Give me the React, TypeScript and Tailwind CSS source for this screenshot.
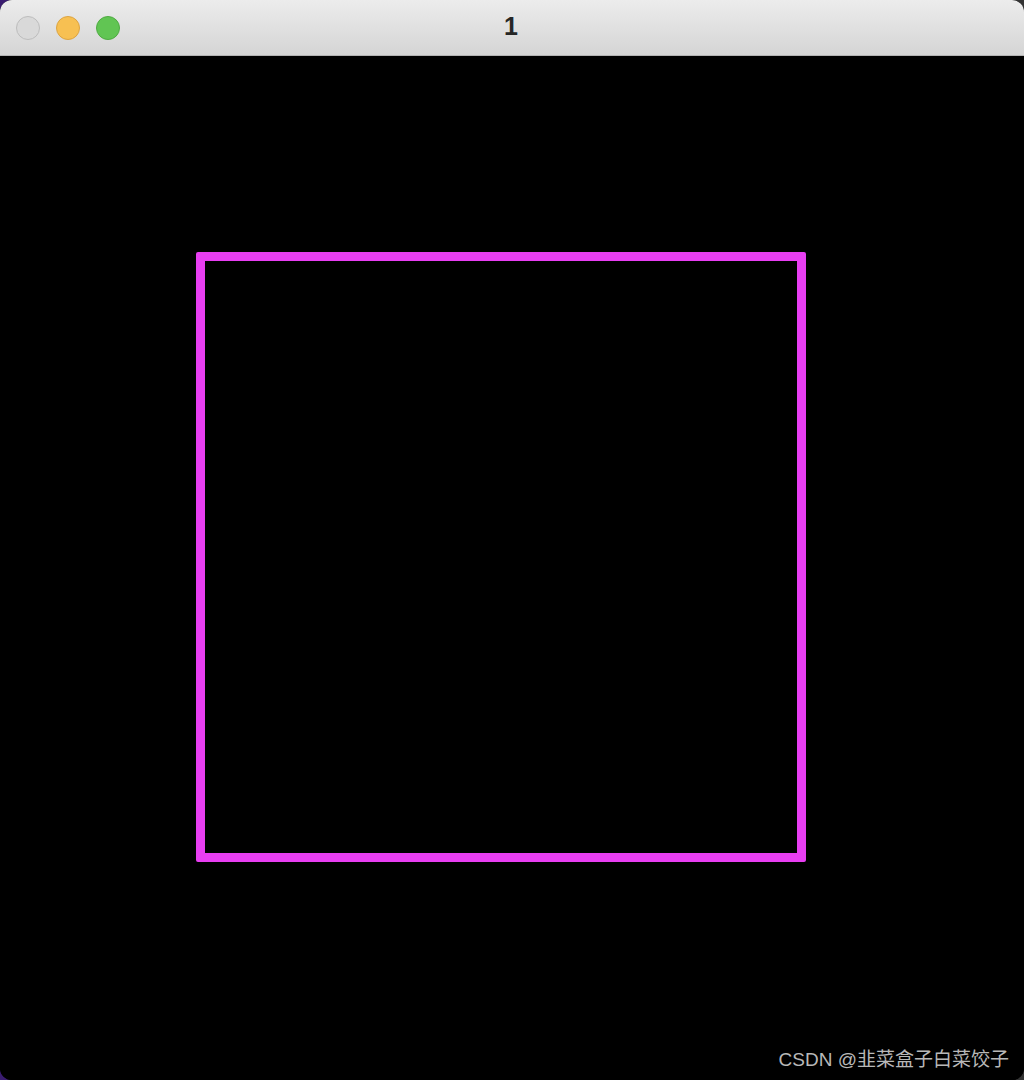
export default function App() {
  return (
    <div className="w-[1024px] h-[1080px] bg-gradient-to-r from-[#3a1c70] via-[#222] to-[#333]">
      <div className="w-full h-full rounded-[12px] overflow-hidden flex flex-col bg-black relative">
        {/* Title bar */}
        <div className="h-[56px] shrink-0 relative flex items-center bg-gradient-to-b from-[#ececec] to-[#d5d5d5] border-b border-[#b4b4b4]">
          <div className="flex items-center gap-4 pl-4">
            <div className="w-6 h-6 rounded-full bg-[#d9d9d9] border border-[#bdbdbd]" />
            <div className="w-6 h-6 rounded-full bg-[#f7c052] border border-[#dca442]" />
            <div className="w-6 h-6 rounded-full bg-[#61c553] border border-[#4fab42]" />
          </div>
          <div
            className="absolute inset-0 flex items-center justify-center text-[25px] font-bold text-[#262626] pointer-events-none"
            style={{ fontFamily: '"Liberation Sans", Arial, sans-serif' }}
          >
            <span className="ml-[-2px] mt-[-1px]">1</span>
          </div>
        </div>

        {/* Canvas */}
        <div className="flex-1 bg-black pt-[196px] pl-[196px]">
          <div className="w-[610px] h-[610px] border-[9px] border-[#e83ef2] rounded-[2px]" />
        </div>

        {/* Watermark */}
        <div
          className="absolute right-[15px] bottom-[11px] text-[19px] leading-none text-[#b8b8b8]"
          style={{ fontFamily: '"Liberation Sans", "Noto Sans CJK SC", sans-serif' }}
        >
          CSDN @韭菜盒子白菜饺子
        </div>
      </div>
    </div>
  );
}
